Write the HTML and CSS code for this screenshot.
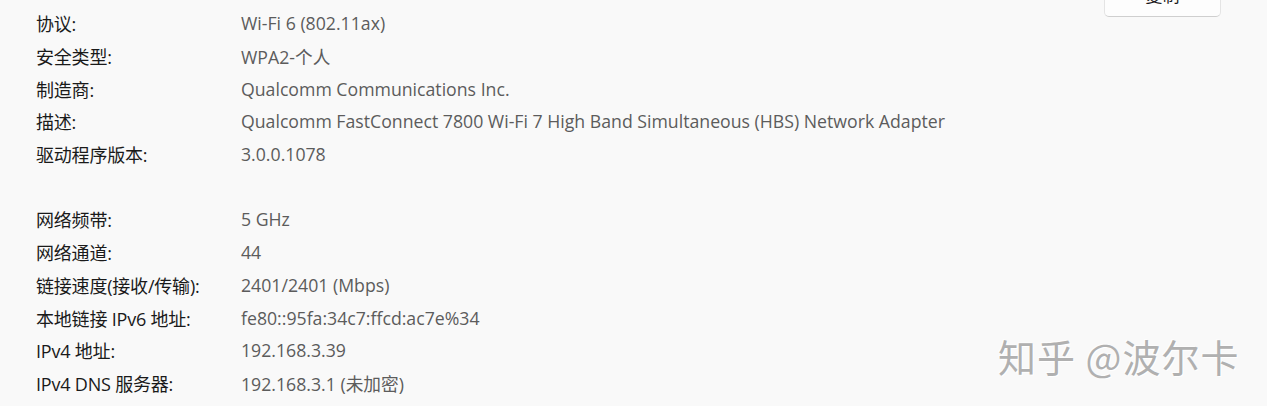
FILE: index.html
```html
<!DOCTYPE html>
<html lang="zh-CN">
<head>
<meta charset="utf-8">
<link rel="stylesheet" href="styles.css">
</head>
<body>
<div class="page">
  <div class="topbar"><button class="copy-btn">复制</button></div>
  <div class="props">
    <div class="row"><span class="label">协议:</span><span class="value">Wi-Fi 6 (802.11ax)</span></div>
    <div class="row"><span class="label">安全类型:</span><span class="value">WPA2-个人</span></div>
    <div class="row"><span class="label">制造商:</span><span class="value">Qualcomm Communications Inc.</span></div>
    <div class="row"><span class="label">描述:</span><span class="value">Qualcomm FastConnect 7800 Wi-Fi 7 High Band Simultaneous (HBS) Network Adapter</span></div>
    <div class="row"><span class="label">驱动程序版本:</span><span class="value">3.0.0.1078</span></div>
    <div class="row spacer"></div>
    <div class="row"><span class="label">网络频带:</span><span class="value">5 GHz</span></div>
    <div class="row"><span class="label">网络通道:</span><span class="value">44</span></div>
    <div class="row"><span class="label">链接速度(接收/传输):</span><span class="value">2401/2401 (Mbps)</span></div>
    <div class="row"><span class="label">本地链接 IPv6 地址:</span><span class="value">fe80::95fa:34c7:ffcd:ac7e%34</span></div>
    <div class="row"><span class="label">IPv4 地址:</span><span class="value">192.168.3.39</span></div>
    <div class="row"><span class="label">IPv4 DNS 服务器:</span><span class="value">192.168.3.1 (未加密)</span></div>
  </div>
  <div class="watermark">知乎 @波尔卡</div>
</div>
</body>
</html>
```
FILE: styles.css
```css
html, body {
  margin: 0;
  padding: 0;
  background: #f9f9f9;
}
.page {
  position: relative;
  width: 1267px;
  height: 406px;
  overflow: hidden;
  font-family: "Open Sans", "Noto Sans CJK SC", sans-serif;
}
.topbar {
  height: 0;
  position: relative;
}
.copy-btn {
  position: absolute;
  left: 1104px;
  top: -18px;
  width: 117px;
  height: 35px;
  background: #fdfdfd;
  border: 1px solid #e4e4e4;
  border-bottom-color: #cfcfcf;
  border-radius: 5px;
  font-family: "Noto Sans CJK SC", sans-serif;
  font-size: 17px;
  color: #1b1b1b;
  padding: 0 0 10px 0;
  line-height: 20px;
}
.props {
  display: flex;
  flex-direction: column;
  padding: 7px 0 0 36px;
}
.row {
  display: flex;
  height: 32.7px;
  align-items: center;
}
.label {
  width: 205px;
  color: #1a1a1a;
  font-size: 18px;
  letter-spacing: -0.2px;
}
.value {
  color: #5c5c5c;
  font-size: 17.7px;
}
.watermark {
  position: absolute;
  left: 998px;
  top: 328px;
  font-family: "Noto Sans CJK SC", sans-serif;
  font-size: 38px;
  color: #b0b0b0;
  letter-spacing: 1px;
  text-shadow: 1px 1px 0 #fff, -1px -1px 0 rgba(255,255,255,0.8);
}
```
